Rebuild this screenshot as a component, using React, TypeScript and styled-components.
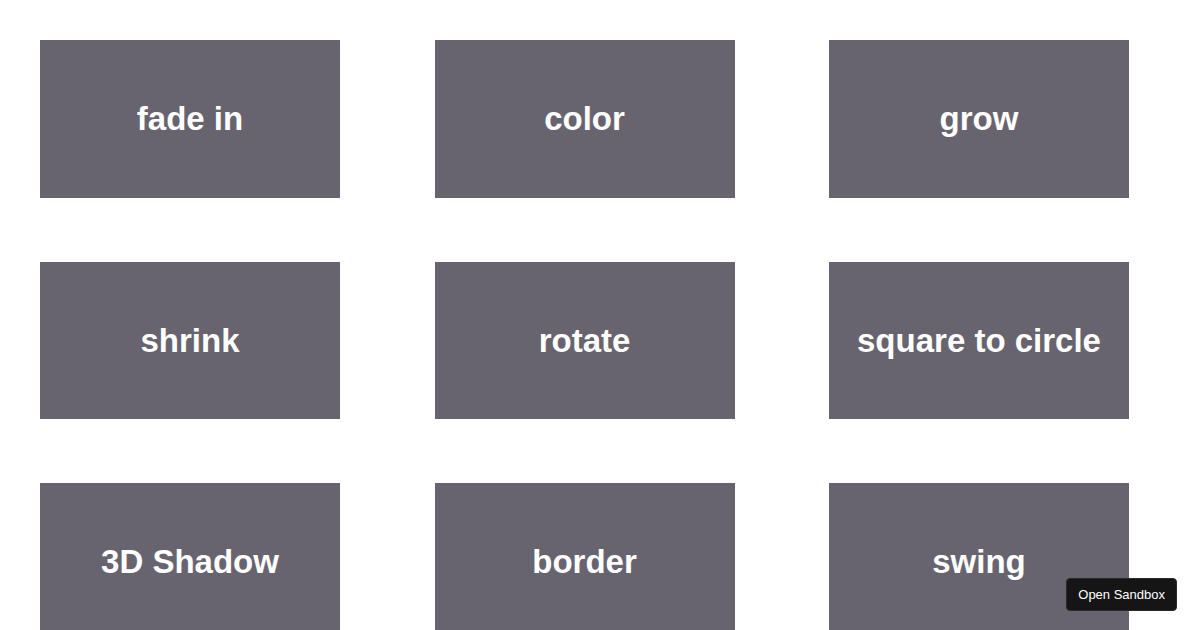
import styled, { createGlobalStyle } from 'styled-components';

const GlobalStyle = createGlobalStyle`
  html, body {
    margin: 0;
    padding: 0;
    background: #ffffff;
    overflow: hidden;
  }
`;

const Page = styled.main`
  display: grid;
  grid-template-columns: repeat(3, 300px);
  column-gap: 94.5px;
  row-gap: 64px;
  padding: 40px;
`;

const Box = styled.div`
  height: 157.5px;
  background-color: #67646f;
  color: #ffffff;
  display: flex;
  align-items: center;
  justify-content: center;
  padding-top: 1px;
  box-sizing: border-box;
  font-family: "Liberation Sans", Arial, sans-serif;
  font-weight: 700;
  font-size: 33px;
`;

const SandboxButton = styled.button`
  position: fixed;
  right: 23px;
  bottom: 19px;
  height: 33px;
  padding: 0 11px;
  background: #151515;
  color: #ffffff;
  border: 1px solid #2a2a2a;
  border-radius: 4px;
  font-family: "Liberation Sans", Arial, sans-serif;
  font-size: 13px;
  cursor: pointer;
`;

const labels = [
  'fade in',
  'color',
  'grow',
  'shrink',
  'rotate',
  'square to circle',
  '3D Shadow',
  'border',
  'swing',
];

const App = () => (
  <>
    <GlobalStyle />
    <Page>
      {labels.map((label) => (
        <Box key={label}>{label}</Box>
      ))}
    </Page>
    <SandboxButton>Open Sandbox</SandboxButton>
  </>
);

export default App;
